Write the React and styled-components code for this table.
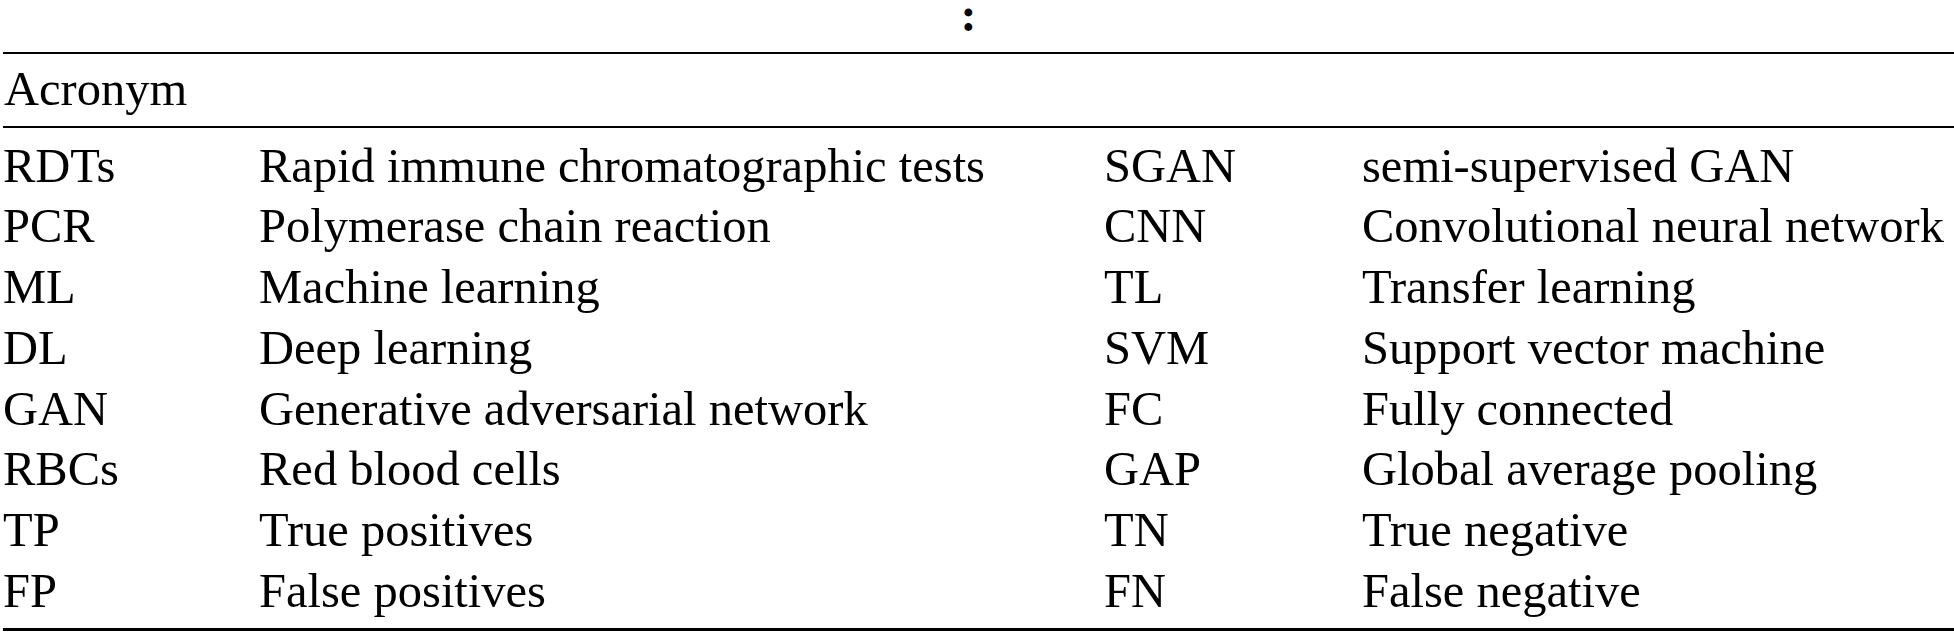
import React from 'react';
import styled, { createGlobalStyle } from 'styled-components';

const GlobalStyle = createGlobalStyle`
    html, body {
        margin: 0;
        padding: 0;
        background: #fff;
    }
`;

const serif = `"Liberation Serif", "Times New Roman", serif`;

const rows = [
    ['RDTs', 'Rapid immune chromatographic tests', 'SGAN', 'semi-supervised GAN'],
    ['PCR', 'Polymerase chain reaction', 'CNN', 'Convolutional neural network'],
    ['ML', 'Machine learning', 'TL', 'Transfer learning'],
    ['DL', 'Deep learning', 'SVM', 'Support vector machine'],
    ['GAN', 'Generative adversarial network', 'FC', 'Fully connected'],
    ['RBCs', 'Red blood cells', 'GAP', 'Global average pooling'],
    ['TP', 'True positives', 'TN', 'True negative'],
    ['FP', 'False positives', 'FN', 'False negative'],
];

const Page = styled.div`
    width: 1954px;
    height: 637px;
    overflow: hidden;
    padding-left: 3px;
    box-sizing: border-box;
    color: #000;
`;

// only the colon of the table title is visible in the crop
const Caption = styled.div`
    height: 52px;
    padding-right: 20px;
    text-align: center;
    font-family: ${serif};
    font-size: 48px;
    font-weight: 700;
    line-height: 30px;
`;

const Table = styled.div`
    border-top: 2px solid #000;
    border-bottom: 3px solid #000;
`;

const Head = styled.div`
    padding: 5px 0 6px 1px;
    border-bottom: 2px solid #000;
    font-family: ${serif};
    font-size: 48.5px;
    line-height: 60.7px;
`;

const Body = styled.div`
    padding: 8px 0 7px;
`;

const Row = styled.div`
    display: grid;
    grid-template-columns: 256px 845px 258px 1fr;
`;

const Cell = styled.div`
    font-family: ${serif};
    font-size: 48.5px;
    line-height: 60.7px;
    white-space: nowrap;
`;

export default function App() {
    return (
        <>
            <GlobalStyle />
            <Page>
                <Caption>:</Caption>
                <Table>
                    <Head>Acronym</Head>
                    <Body>
                        {rows.map((r) => (
                            <Row key={r[0]}>
                                {r.map((c, i) => (
                                    <Cell key={i}>{c}</Cell>
                                ))}
                            </Row>
                        ))}
                    </Body>
                </Table>
            </Page>
        </>
    );
}
